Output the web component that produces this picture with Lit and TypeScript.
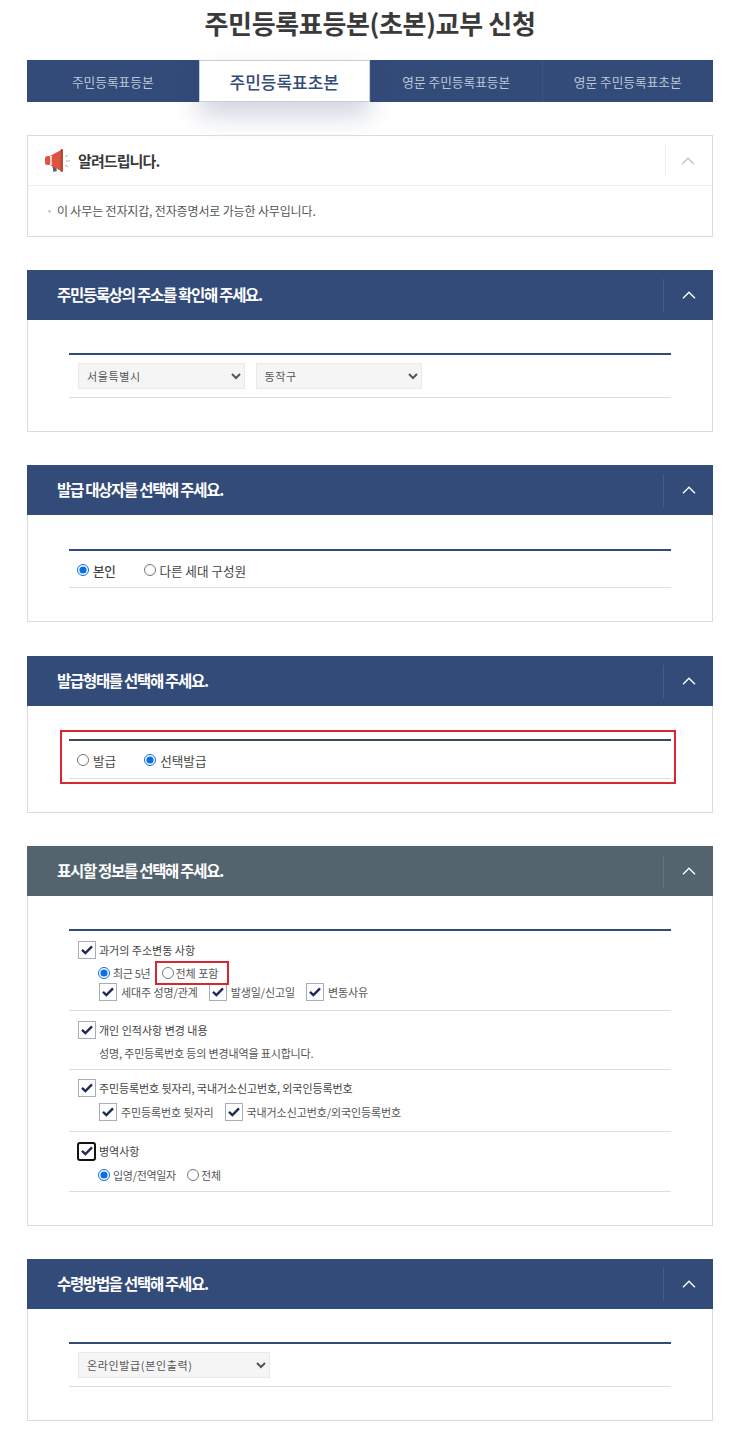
import { LitElement, html, css, svg } from "lit";
import { customElement } from "lit/decorators.js";

const chevron = svg`<svg class="chev" width="14" height="8" viewBox="0 0 14 8" fill="none" stroke="currentColor" stroke-width="1.4"><path d="M1 7.2 7 1.2l6 6"/></svg>`;
const checkIcon = svg`<svg width="12" height="10" viewBox="0 0 12 10" fill="none" stroke="#1f2a55" stroke-width="2.4"><path d="M1 4.8 4.4 8 11 1.4"/></svg>`;

@customElement("app-root")
export class AppRoot extends LitElement {
  static styles = css`
    :host { display: block; background: #fff; color: #444; font-family: "Noto Sans CJK KR", "Noto Sans", sans-serif; font-size: 11px; }
    * { box-sizing: border-box; }
    .page { padding: 0 27px 20px; display: flex; flex-direction: column; }
    h1 { margin: 0; height: 60px; line-height: 46px; text-align: center; font-size: 26px; font-weight: 700; letter-spacing: -0.35px; color: #3a3a3a; }
    .tabs { display: grid; grid-template-columns: repeat(4, 1fr); height: 42px; background: #334b79; margin-bottom: 33px; }
    .tab { display: flex; align-items: center; justify-content: center; color: #bcc6d8; font-size: 12.7px; border-left: 1px solid #3c5483; }
    .tab:first-child { border-left: 0; }
    .tab.on { background: #fff; color: #334b79; font-size: 17px; font-weight: 500; border: 1px solid #c5cede; box-shadow: 0 14px 24px rgba(50, 70, 120, 0.22); }
    .notice { border: 1px solid #dcdcdc; height: 102px; margin-bottom: 33px; }
    .nhead { height: 50px; border-bottom: 1px solid #eee; display: flex; align-items: center; padding-left: 16px; gap: 6px; font-size: 15px; font-weight: 700; color: #3a3a3a; letter-spacing: -0.9px; }
    .nhead .tog { margin-left: auto; width: 47px; padding-right: 3px; }
    .tog { width: 50px; height: 33px; display: flex; align-items: center; justify-content: center; border-left: 1px solid #f0f0f0; color: #c4c4c4; }
    .nbody { padding: 16px 19px 0 20px; display: flex; gap: 6px; line-height: 17px; font-size: 12px; color: #555; letter-spacing: -0.15px; }
    .dot { color: #bbb; font-size: 9px; }
    .card { border: 1px solid #dcdcdc; border-top: 0; margin-bottom: 34px; }
    .card.first { margin-bottom: 33px; }
    .card:last-child { margin-bottom: 0; }
    .head { margin: 0 -1px; height: 50px; background: #334b79; color: #fff; display: flex; align-items: center; justify-content: space-between; padding-left: 30px; font-size: 15.5px; font-weight: 700; letter-spacing: -1.3px; }
    .head.alt { background: #53646e; }
    .head .ttl { padding-bottom: 2px; }
    .head .tog { border-left-color: rgba(255, 255, 255, 0.1); color: #fff; letter-spacing: 0; }
    .body { padding: 33px 41px 33px; }
    .body.top34 { padding-top: 34px; }
    .inner { border-top: 2px solid #334b79; border-bottom: 1px solid #ddd; position: relative; }
    .inner.dark { border-top-color: #3f4a5c; }
    .inner.mark::after { content: ""; position: absolute; left: -9px; right: -5px; top: -11px; bottom: -6px; border: 2px solid #d8272e; pointer-events: none; }
    .selrow { display: flex; gap: 11px; padding: 8px 9px 8px; }
    select { height: 26px; border: 1px solid #e9e9e9; background: #f5f5f5; color: #555; font-family: inherit; font-size: 11px; padding: 0 4px; letter-spacing: 0.65px; border-radius: 0; }
    .s167 { width: 166.5px; }
    .s192 { width: 192px; }
    .radios { display: flex; align-items: center; height: 36px; padding: 2px 0 0 8px; gap: 28px; font-size: 12.6px; color: #444; }
    .radios.tall { height: 37px; padding-top: 1px; }
    label { display: inline-flex; align-items: center; }
    input[type="radio"] { margin: 0 4px 0 0; width: 12px; height: 12px; accent-color: #0b6fe0; }
    .radios.big { gap: 29px; }
    .radios.big input { margin-right: 3px; }
    .radios.big label:first-child input { margin-right: 4px; }
    .radios.big b { font-weight: 500; letter-spacing: -0.4px; }
    .block { border-bottom: 1px solid #ddd; padding: 10px 0 9px 9px; display: flex; flex-direction: column; }
    .inner.flat { border-bottom: 0; }
    .line { display: flex; align-items: center; height: 18px; }
    .line.strong { color: #444; }
    .cb { width: 18px; height: 18px; border: 1px solid #aab; background: #fff; display: inline-flex; align-items: center; justify-content: center; margin-right: 3px; flex: none; }
    .cb.focus { border: 2px solid #111; border-radius: 3px; width: 19px; height: 19px; margin-left: -1px; margin-right: 3px; }
    .sub { padding-left: 21px; color: #555; letter-spacing: -0.1px; }
    .sub .cb { margin-right: 4px; }
    .sub label + label { margin-left: 11px; }
    .rad { height: 16px; padding-left: 20px; color: #555; }
    .rad input { margin-right: 3px; }
    .rad .narrow { letter-spacing: -0.3px; }
    .mt2 { margin-top: 2px; }
    .mt5 { margin-top: 5px; }
    .mt6 { margin-top: 6px; }
    .mt7 { margin-top: 7px; }
    .pb7 { padding-bottom: 7px; }
    .pb10 { padding-bottom: 10px; }
    .pb8 { padding-bottom: 8px; }
    .pt9 { padding-top: 9px; }
    .note { padding-left: 21px; color: #555; letter-spacing: -0.15px; }
    .gap10 { margin-left: 11px; }
    .gap10 input { margin-right: 2px; }
    .redbox { position: relative; margin-left: 12px; }
    .redbox input { margin-right: 1px; }
    .redbox::after { content: ""; position: absolute; left: -7px; right: -11px; top: -4px; bottom: -4px; border: 2px solid #d8272e; pointer-events: none; }
    .tight { letter-spacing: -0.1px; }
  `;

  private head(title: string, alt = false) {
    return html`<div class="head ${alt ? "alt" : ""}"><span class="ttl">${title}</span><span class="tog">${chevron}</span></div>`;
  }

  private cb(text: string, focus = false) {
    return html`<label><span class="cb ${focus ? "focus" : ""}">${checkIcon}</span>${text}</label>`;
  }

  render() {
    return html`
      <div class="page">
        <h1>주민등록표등본(초본)교부 신청</h1>
        <div class="tabs">
          <div class="tab">주민등록표등본</div>
          <div class="tab on">주민등록표초본</div>
          <div class="tab">영문 주민등록표등본</div>
          <div class="tab">영문 주민등록표초본</div>
        </div>

        <div class="notice">
          <div class="nhead">
            <svg width="28" height="26" viewBox="0 0 28 26">
              <path d="M8 16l3 0 2 7-3.5 1z" fill="#56606e"/>
              <rect x="1" y="8" width="6" height="9" rx="2.5" fill="#e0533f"/>
              <path d="M6 8l11-6v21L6 17z" fill="#e0533f"/>
              <rect x="6" y="8" width="2" height="9" fill="#f5d8d0"/>
              <rect x="16.5" y="1" width="2.5" height="23" rx="1.2" fill="#b7483a"/>
              <path d="M21 9l3-2M22 13h4M21 17l3 2" stroke="#aab0b8" stroke-width="1" fill="none"/>
            </svg>
            <span>알려드립니다.</span>
            <span class="tog">${chevron}</span>
          </div>
          <div class="nbody"><span class="dot">•</span><span>이 사무는 전자지갑, 전자증명서로 가능한 사무입니다.</span></div>
        </div>

        <section class="card first">
          ${this.head("주민등록상의 주소를 확인해 주세요.")}
          <div class="body">
            <div class="inner">
              <div class="selrow">
                <select class="s167"><option>서울특별시</option></select>
                <select class="s167"><option>동작구</option></select>
              </div>
            </div>
          </div>
        </section>

        <section class="card">
          ${this.head("발급 대상자를 선택해 주세요.")}
          <div class="body top34">
            <div class="inner">
              <div class="radios big">
                <label><input type="radio" name="a" checked /><b>본인</b></label>
                <label><input type="radio" name="a" />다른 세대 구성원</label>
              </div>
            </div>
          </div>
        </section>

        <section class="card first">
          ${this.head("발급형태를 선택해 주세요.")}
          <div class="body">
            <div class="inner dark mark">
              <div class="radios tall">
                <label><input type="radio" name="b" />발급</label>
                <label><input type="radio" name="b" checked />선택발급</label>
              </div>
            </div>
          </div>
        </section>

        <section class="card first">
          ${this.head("표시할 정보를 선택해 주세요.", true)}
          <div class="body">
            <div class="inner flat">
              <div class="block">
                <div class="line strong">${this.cb("과거의 주소변동 사항")}</div>
                <div class="line rad mt6">
                  <label class="narrow"><input type="radio" name="c" checked />최근 5년</label>
                  <label class="redbox"><input type="radio" name="c" />전체 포함</label>
                </div>
                <div class="line sub mt2">
                  ${this.cb("세대주 성명/관계")}${this.cb("발생일/신고일")}${this.cb("변동사유")}
                </div>
              </div>
              <div class="block pb7">
                <div class="line strong">${this.cb("개인 인적사항 변경 내용")}</div>
                <div class="line note mt5">성명, 주민등록번호 등의 변경내역을 표시합니다.</div>
              </div>
              <div class="block pt9 pb10">
                <div class="line strong tight">${this.cb("주민등록번호 뒷자리, 국내거소신고번호, 외국인등록번호")}</div>
                <div class="line sub mt6">
                  ${this.cb("주민등록번호 뒷자리")}${this.cb("국내거소신고번호/외국인등록번호")}
                </div>
              </div>
              <div class="block pb8">
                <div class="line strong">${this.cb("병역사항", true)}</div>
                <div class="line rad mt7">
                  <label class="narrow"><input type="radio" name="d" checked />입영/전역일자</label>
                  <label class="gap10"><input type="radio" name="d" />전체</label>
                </div>
              </div>
            </div>
          </div>
        </section>

        <section class="card">
          ${this.head("수령방법을 선택해 주세요.")}
          <div class="body">
            <div class="inner">
              <div class="selrow">
                <select class="s192"><option>온라인발급(본인출력)</option></select>
              </div>
            </div>
          </div>
        </section>
      </div>
    `;
  }
}
